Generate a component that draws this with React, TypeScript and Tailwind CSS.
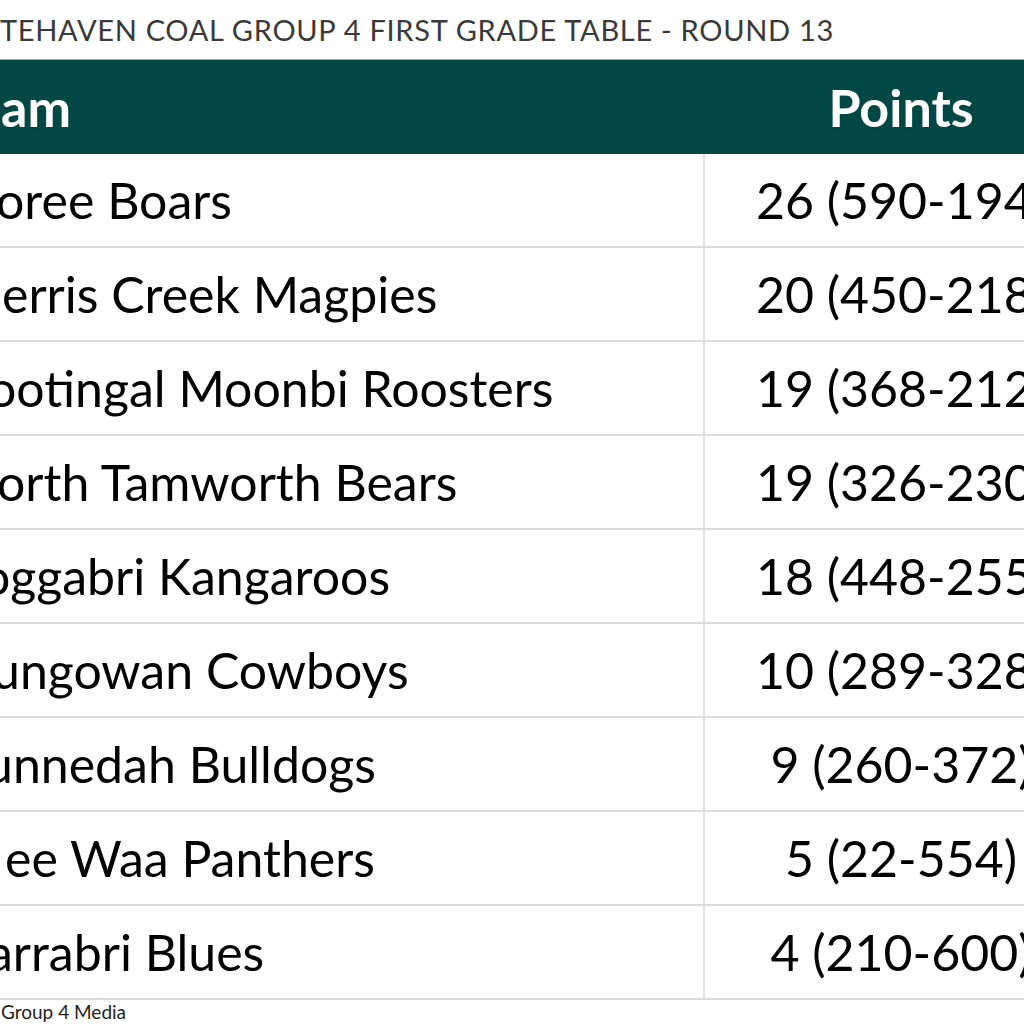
const rows = [
  { team: "oree Boars", points: "26 (590-194)", shift: "-ml-[4px]" },
  { team: "erris Creek Magpies", points: "20 (450-218)", shift: "ml-[2px]" },
  { team: "ootingal Moonbi Roosters", points: "19 (368-212)", shift: "-ml-[12px]" },
  { team: "orth Tamworth Bears", points: "19 (326-230)", shift: "-ml-[3px]" },
  { team: "oggabri Kangaroos", points: "18 (448-255)", shift: "-ml-[18px]" },
  { team: "ungowan Cowboys", points: "10 (289-328)", shift: "-ml-[8px]" },
  { team: "unnedah Bulldogs", points: "9 (260-372)", shift: "-ml-[15px]" },
  { team: "ee Waa Panthers", points: "5 (22-554)", shift: "ml-[5px]" },
  { team: "arrabri Blues", points: "4 (210-600)", shift: "-ml-[12px]" },
];

export default function App() {
  return (
    <div
      className="w-[1024px] h-[1024px] overflow-hidden bg-white"
      style={{ fontFamily: "Lato, 'Liberation Sans', sans-serif" }}
    >
      <div className="w-[1100px]">
        <div className="h-[59px] flex items-center text-[29px] tracking-[0.7px] text-[#3a3a3a] whitespace-nowrap">
          TEHAVEN COAL GROUP 4 FIRST GRADE TABLE - ROUND 13
        </div>

        <div className="flex h-[95px] bg-[#014844] border-t border-[#8fb0ab] text-white font-bold text-[52px]">
          <div className="w-[705px] flex items-center pl-[1px]">am</div>
          <div className="w-[392px] flex items-center justify-center">Points</div>
        </div>

        {rows.map((row) => (
          <div
            key={row.team}
            className="flex h-[94px] border-b-2 border-[#dcdcdc] text-black text-[50px]"
          >
            <div className="w-[705px] flex items-center whitespace-nowrap overflow-hidden border-r-2 border-[#e2e2e2]">
              <span className={row.shift}>{row.team}</span>
            </div>
            <div className="w-[392px] flex items-center justify-center whitespace-nowrap">
              {row.points}
            </div>
          </div>
        ))}

        <div className="pt-[1px] text-[19px] leading-[22px] text-[#222] pl-[1px]">
          Group 4 Media
        </div>
      </div>
    </div>
  );
}
